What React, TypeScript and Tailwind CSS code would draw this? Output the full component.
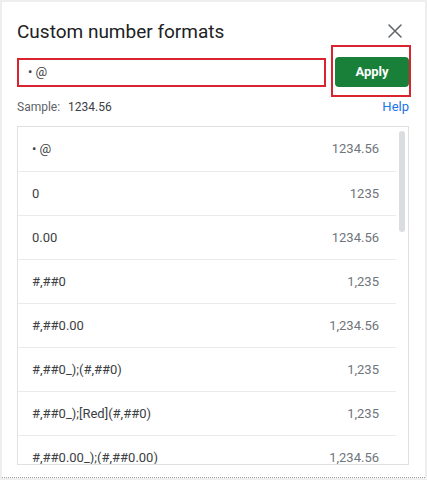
import React from "react";

const rows: [string, string][] = [
  ["• @", "1234.56"],
  ["0", "1235"],
  ["0.00", "1234.56"],
  ["#,##0", "1,235"],
  ["#,##0.00", "1,234.56"],
  ["#,##0_);(#,##0)", "1,235"],
  ["#,##0_);[Red](#,##0)", "1,235"],
  ["#,##0.00_);(#,##0.00)", "1,234.56"],
];

export default function App() {
  return (
    <div className="w-[427px] h-[480px] bg-[#eeeeee] overflow-hidden pt-[2px] pl-[2px]" style={{ fontFamily: "Roboto, 'Liberation Sans', sans-serif" }}>
      <div className="relative w-[423px] h-[476px] bg-white flex flex-col pl-[15px] pr-[16px] pt-[15px] border-b border-dotted border-[#9aa0a6]">
        <div className="flex items-center justify-between h-[28px]">
          <span className="text-[19px] text-[#202124] leading-none">Custom number formats</span>
          <svg width="14" height="14" viewBox="0 0 14 14" className="mr-[7px]">
            <path d="M1 1L13 13M13 1L1 13" stroke="#5f6368" strokeWidth="1.5" strokeLinecap="round" />
          </svg>
        </div>

        <div className="relative flex items-center mt-[12px] h-[30px] gap-[9px]">
          <div className="w-[309px] h-[29px] border-2 border-[#d9232e] flex items-center pl-[9px] text-[13px] text-[#3c4043]">
            • @
          </div>
          <div className="w-[74px] h-[30px] rounded-[4px] bg-[#188038] flex items-center justify-center text-white text-[13px] font-bold">
            Apply
          </div>
          <div className="absolute left-[314px] top-[-12px] w-[80px] h-[52px] border-2 border-[#d9232e]" />
        </div>

        <div className="flex items-center justify-between mt-[10px] h-[20px] text-[12px]">
          <div className="flex gap-[8px]">
            <span className="text-[#5f6368]">Sample:</span>
            <span className="text-[#3c4043]">1234.56</span>
          </div>
          <span className="text-[#1a73e8] text-[13px]">Help</span>
        </div>

        <div className="relative mt-[9px] h-[339px] border border-[#e0e0e0] overflow-hidden">
          <div className="w-[378px]">
            {rows.map(([f, v], i) => (
              <div key={i} className={`h-[44px] flex items-center justify-between pl-[14px] pr-[17px] text-[13px] ${i > 0 ? "border-t border-[#e8eaed]" : ""}`}>
                <span className="text-[#3c4043]">{f}</span>
                <span className="text-[#70757a]">{v}</span>
              </div>
            ))}
          </div>
          <div className="absolute left-[381px] top-[4px] w-[6px] h-[101px] rounded-full bg-[#dadce0]" />
        </div>
      </div>
    </div>
  );
}
